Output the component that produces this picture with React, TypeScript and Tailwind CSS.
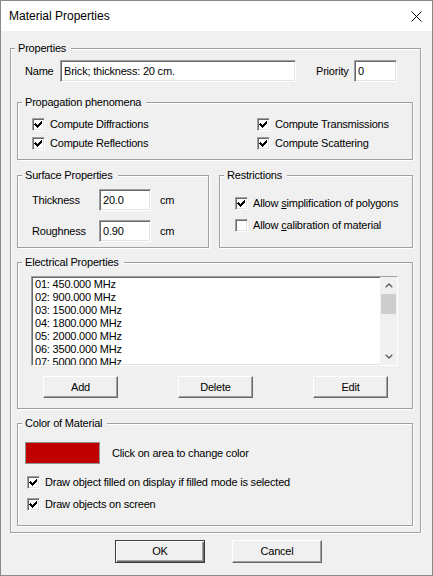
import type { ReactNode } from 'react'
import { clsx } from 'clsx'

const sunken =
  'bg-white border border-t-[#a0a0a0] border-l-[#a0a0a0] border-r-white border-b-white shadow-[inset_1px_1px_0_#696969,inset_-1px_-1px_0_#e3e3e3]'

function Group({ title, className, children }: { title: string; className?: string; children?: ReactNode }) {
  return (
    <fieldset
      className={clsx(
        'border border-[#a0a0a0] shadow-[1px_1px_0_#fff,inset_1px_1px_0_#fff]',
        className,
      )}
    >
      <legend className="ml-[4px] pl-[3px] pr-[5px] leading-[13px] bg-[#f0f0f0]">{title}</legend>
      {children}
    </fieldset>
  )
}

function Check({ checked }: { checked: boolean }) {
  return (
    <span className={clsx('w-[13px] h-[13px] shrink-0 flex', sunken)}>
      {checked && (
        <svg width="11" height="11" viewBox="0 0 11 11" shapeRendering="crispEdges">
          <path
            d="M2 4h1v1h1v1h1v-1h1v-1h1v-1h1v-1h1v3h-1v1h-1v1h-1v1h-1v1h-1v-1h-1v-1h-1v-1h-1z"
            fill="#000"
          />
        </svg>
      )}
    </span>
  )
}

function CheckRow({ checked, children }: { checked: boolean; children: ReactNode }) {
  return (
    <div className="h-[18px] flex items-center">
      <Check checked={checked} />
      <span className="ml-[5px] whitespace-nowrap">{children}</span>
    </div>
  )
}

function Field({ value, className }: { value: string; className?: string }) {
  return (
    <input
      defaultValue={value}
      className={clsx('h-[22px] pl-[3px] outline-none text-black', sunken, className)}
    />
  )
}

function Button({ label, isDefault, className }: { label: string; isDefault?: boolean; className?: string }) {
  return (
    <button
      type="button"
      className={clsx(
        'bg-[#f0f0f0] flex items-center justify-center border',
        isDefault
          ? 'border-[#3c3c3c] shadow-[inset_1px_1px_0_#fff,inset_-1px_-1px_0_#696969,inset_-2px_-2px_0_#a0a0a0]'
          : 'border-t-white border-l-white border-r-[#696969] border-b-[#696969] shadow-[inset_-1px_-1px_0_#a0a0a0]',
        className,
      )}
    >
      {label}
    </button>
  )
}

const freqs = [
  '01: 450.000 MHz',
  '02: 900.000 MHz',
  '03: 1500.000 MHz',
  '04: 1800.000 MHz',
  '05: 2000.000 MHz',
  '06: 3500.000 MHz',
  '07: 5000.000 MHz',
]

export default function App() {
  return (
    <div className="w-[433px] h-[576px] bg-[#f0f0f0] border border-[#888] flex flex-col text-black text-[11px] leading-[13px] tracking-[-0.2px] font-['Liberation_Sans',Arial,sans-serif]">
      {/* title bar */}
      <div className="h-[30px] bg-white flex items-center justify-between pl-[8px] pr-[10px]">
        <span className="text-[12px] tracking-normal">Material Properties</span>
        <svg width="11" height="11" viewBox="0 0 11 11">
          <path d="M0.5 0.5L10.5 10.5M10.5 0.5L0.5 10.5" stroke="#000" strokeWidth="1" />
        </svg>
      </div>

      <Group title="Properties" className="mt-[11px] ml-[9px] w-[411px] h-[491px]">
        <div className="mt-[5px] pl-[14px] flex items-center h-[22px]">
          <span className="w-[35px]">Name</span>
          <Field value="Brick; thickness: 20 cm." className="w-[236px]" />
          <span className="ml-[20px] w-[38px]">Priority</span>
          <Field value="0" className="w-[43px]" />
        </div>

        <Group title="Propagation phenomena" className="mt-[14px] ml-[6px] w-[396px] h-[64px]">
          <div className="pt-[6px] pl-[14px] grid grid-cols-[225px_1fr] gap-y-[1px]">
            <CheckRow checked>Compute Diffractions</CheckRow>
            <CheckRow checked>Compute Transmissions</CheckRow>
            <CheckRow checked>Compute Reflections</CheckRow>
            <CheckRow checked>Compute Scattering</CheckRow>
          </div>
        </Group>

        <div className="mt-[9px] ml-[6px] flex">
          <Group title="Surface Properties" className="w-[192px] h-[79px]">
            <div className="pt-[7px] pl-[14px] flex items-center h-[29px]">
              <span className="w-[67px]">Thickness</span>
              <Field value="20.0" className="w-[52px]" />
              <span className="ml-[9px]">cm</span>
            </div>
            <div className="mt-[9px] pl-[14px] flex items-center h-[22px]">
              <span className="w-[67px]">Roughness</span>
              <Field value="0.90" className="w-[52px]" />
              <span className="ml-[9px]">cm</span>
            </div>
          </Group>
          <Group title="Restrictions" className="ml-[10px] w-[194px] h-[79px]">
            <div className="pt-[12px] pl-[15px] flex flex-col gap-[4px]">
              <CheckRow checked>
                Allow <span className="underline">s</span>implification of polygons
              </CheckRow>
              <CheckRow checked={false}>
                Allow <span className="underline">c</span>alibration of material
              </CheckRow>
            </div>
          </Group>
        </div>

        <Group title="Electrical Properties" className="mt-[8px] ml-[6px] w-[396px] h-[153px]">
          <div className={clsx('mt-[7px] ml-[13px] w-[367px] h-[90px] flex', sunken)}>
            <div className="flex-1 pl-[3px] pt-[1px] overflow-hidden">
              {freqs.map((f) => (
                <div key={f} className="h-[13px] whitespace-nowrap">
                  {f}
                </div>
              ))}
            </div>
            <div className="w-[17px] bg-[#f0f0f0] flex flex-col">
              <div className="h-[17px] flex items-center justify-center">
                <svg width="8" height="5" viewBox="0 0 8 5">
                  <path d="M0.7 4.3L4 1L7.3 4.3" stroke="#606060" strokeWidth="1.4" fill="none" />
                </svg>
              </div>
              <div className="h-[20px] mx-[1px] bg-[#cdcdcd]" />
              <div className="flex-1" />
              <div className="h-[17px] flex items-center justify-center">
                <svg width="8" height="5" viewBox="0 0 8 5">
                  <path d="M0.7 0.7L4 4L7.3 0.7" stroke="#606060" strokeWidth="1.4" fill="none" />
                </svg>
              </div>
            </div>
          </div>
          <div className="mt-[10px] ml-[25px] flex gap-[60px]">
            <Button label="Add" className="w-[75px] h-[22px]" />
            <Button label="Delete" className="w-[75px] h-[22px]" />
            <Button label="Edit" className="w-[75px] h-[22px]" />
          </div>
        </Group>

        <Group title="Color of Material" className="mt-[8px] ml-[6px] w-[396px] h-[109px]">
          <div className="mt-[12px] ml-[7px] flex items-center">
            <div className="w-[75px] h-[22px] bg-[#c00000] border border-[#909090]" />
            <span className="ml-[12px]">Click on area to change color</span>
          </div>
          <div className="mt-[9px] pl-[9px] flex flex-col gap-[4px]">
            <CheckRow checked>Draw object filled on display if filled mode is selected</CheckRow>
            <CheckRow checked>Draw objects on screen</CheckRow>
          </div>
        </Group>
      </Group>

      <div className="mt-[7px] ml-[114px] flex gap-[27px]">
        <Button label="OK" isDefault className="w-[90px] h-[23px]" />
        <Button label="Cancel" className="w-[90px] h-[23px]" />
      </div>
    </div>
  )
}
